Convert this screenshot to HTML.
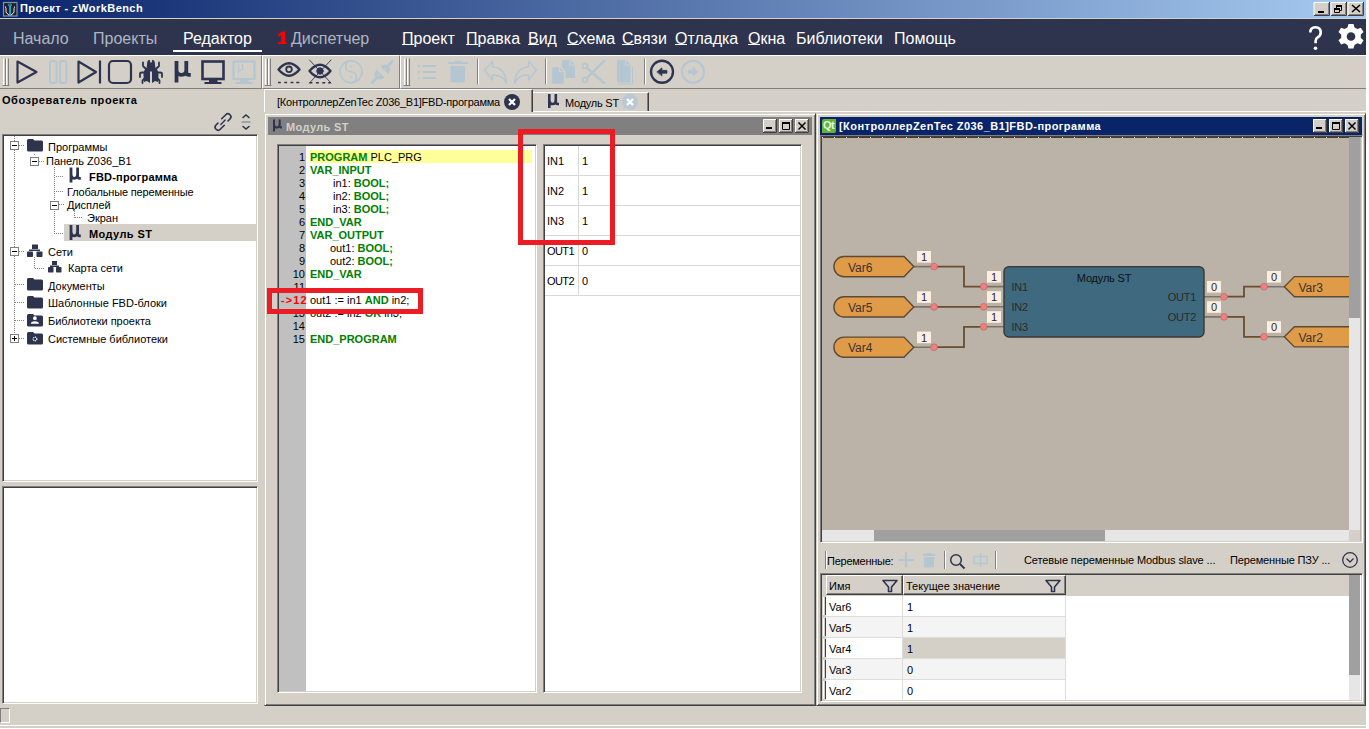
<!DOCTYPE html>
<html><head><meta charset="utf-8">
<style>
*{margin:0;padding:0;box-sizing:border-box}
html,body{width:1369px;height:729px;overflow:hidden;background:#fff;font-family:"Liberation Sans",sans-serif;font-size:11px;color:#000}
.a{position:absolute}
#app{position:absolute;left:0;top:0;width:1366px;height:728px;background:#d4d0c8;overflow:hidden}
.t{position:absolute;white-space:nowrap;line-height:1}
.m{position:absolute;top:31px;font-size:16px;color:#fff;white-space:nowrap;line-height:1}
.m u{text-decoration:none;display:inline-block;height:14px;border-bottom:1px solid #fff}
.tab{position:absolute;top:31px;font-size:16px;color:#aeb6c2;white-space:nowrap;line-height:1}
svg{position:absolute;overflow:visible}
.sunk{border:1px solid;border-color:#808080 #fff #fff #808080;box-shadow:inset 1px 1px 0 #404040,inset -1px -1px 0 #d4d0c8}
.hdr{background:#d4d0c8;border-top:1px solid #fff;border-left:1px solid #fff;border-right:1px solid #404040;border-bottom:1px solid #404040;box-shadow:inset -1px -1px 0 #808080}
#ed .ln{height:13px;line-height:13px;white-space:nowrap;position:relative}
#ed .ln b{display:inline-block;width:27px;text-align:right;font-weight:normal;padding-right:1px}
#ed .ln span{position:absolute;left:31px;top:0}
#ed i{font-style:normal;font-weight:bold;color:#008000}

</style></head>
<body>
<div id="app">
 <!-- title bar -->
 <div class="a" style="left:0;top:0;width:1366px;height:18px;background:linear-gradient(to right,#0a246a,#a6caf0)"></div>
 <div class="t" style="left:20px;top:3px;font-weight:bold;color:#fff;font-size:11px;letter-spacing:0.45px">Проект - zWorkBench</div>
 <!-- menu bar -->
 <div class="a" style="left:0;top:19px;width:1366px;height:36px;background:#2e344e"></div>
 <div class="tab" style="left:13px">Начало</div>
 <div class="tab" style="left:93px">Проекты</div>
 <div class="tab" style="left:183px;color:#fff">Редактор</div>
 <div class="a" style="left:173px;top:50px;width:89px;height:2px;background:#fff"></div>
 <svg style="left:0;top:0" width="300" height="50"><path d="M278.3 34.2L282.3 31.5H285.2V42.2H286.6V44H278V42.2H281.2V35.3L278.3 36.4Z" fill="#f00"/></svg>
 <div class="tab" style="left:291px">Диспетчер</div>
 <div class="m" style="left:402px"><u>П</u>роект</div>
 <div class="m" style="left:466px"><u>П</u>равка</div>
 <div class="m" style="left:528px"><u>В</u>ид</div>
 <div class="m" style="left:567px"><u>С</u>хема</div>
 <div class="m" style="left:622px"><u>С</u>вязи</div>
 <div class="m" style="left:675px"><u>О</u>тладка</div>
 <div class="m" style="left:748px"><u>О</u>кна</div>
 <div class="m" style="left:796px">Библиотеки</div>
 <div class="m" style="left:894px">Помощь</div>
 <!-- window buttons -->

 <div class="a" style="left:1314px;top:2px;width:16px;height:14px" class="wb"></div>
 <svg style="left:0;top:0" width="1366" height="90">
  <!-- app icon -->
  <rect x="3.5" y="2.5" width="13.5" height="13.5" fill="#1c2236" stroke="#8a8e98" stroke-width="1.2"/>
  <path d="M10 5.5V15.5" stroke="#22c0d0" stroke-width="1.6"/><ellipse cx="10" cy="5" rx="1.8" ry="1" fill="none" stroke="#20a8b8" stroke-width="0.9"/>
  <path d="M5.5 6.5q0 1.5 0.5 2.2v3q0 1.5 2 2.3l1 1.5M14.5 6.5q0 1.5 -0.5 2.2v3q0 1.5 -2 2.3l-1 1.5" stroke="#e8e8e8" stroke-width="1" fill="none"/>
  <!-- title buttons -->
  <g id="wbtn">
   <rect x="1314" y="2" width="16" height="14" fill="#d4d0c8"/>
   <path d="M1314 15.5V2.5H1329.5" stroke="#fff" fill="none"/>
   <path d="M1314 15.5H1329.5V2" stroke="#404040" fill="none"/>
   <path d="M1315 14.5H1328.5V3" stroke="#808080" fill="none"/>
   <rect x="1318" y="11" width="6" height="2" fill="#000"/>
   <rect x="1331" y="2" width="16" height="14" fill="#d4d0c8"/>
   <path d="M1331 15.5V2.5H1346.5" stroke="#fff" fill="none"/>
   <path d="M1331 15.5H1346.5V2" stroke="#404040" fill="none"/>
   <path d="M1332 14.5H1345.5V3" stroke="#808080" fill="none"/>
   <path d="M1336.5 5.5h5v5h-5z M1334.5 8.5h5v4h-5z" stroke="#000" fill="none"/>
   <path d="M1336 5h6v2h-6z M1334 8h6v2h-6z" fill="#000"/>
   <rect x="1335" y="10" width="4" height="2" fill="#d4d0c8"/>
   <rect x="1348" y="2" width="16" height="14" fill="#d4d0c8"/>
   <path d="M1348 15.5V2.5H1363.5" stroke="#fff" fill="none"/>
   <path d="M1348 15.5H1363.5V2" stroke="#404040" fill="none"/>
   <path d="M1349 14.5H1362.5V3" stroke="#808080" fill="none"/>
   <path d="M1352 5l8 7M1360 5l-8 7" stroke="#000" stroke-width="1.6"/>
  </g>
  <!-- help & gear -->
  <path d="M1310.3 32.5q0 -5.3 5.2 -5.3q5.2 0 5.2 5.2q0 3 -2.8 4.8q-2.3 1.5 -2.3 3.8v2.2" stroke="#fff" stroke-width="2.6" fill="none"/><circle cx="1315.5" cy="48.3" r="1.8" fill="#fff"/>
  <g transform="translate(1351,36.5)" fill="#fff">
   <path d="M-2.5,-12.5h5l1,3.5 3,1.6 3.4,-1.3 2.6,4.3 -2.7,2.4v3.4l2.7,2.4 -2.6,4.3 -3.4,-1.3 -3,1.6 -1,3.5h-5l-1,-3.5 -3,-1.6 -3.4,1.3 -2.6,-4.3 2.7,-2.4v-3.4l-2.7,-2.4 2.6,-4.3 3.4,1.3 3,-1.6z"/>
   <circle r="4.3" fill="#2e344e"/>
  </g>
 </svg>
 <!-- toolbar -->
 <div class="a" style="left:0;top:55px;width:1366px;height:34px;background:#d4d0c8;border-top:1px solid #fff;border-bottom:1px solid #808080"></div>
 <svg style="left:0;top:0" width="1366" height="90">
  <g fill="none" stroke-linecap="round" stroke-linejoin="round">
   <!-- grips -->
   <g id="grip"><path d="M3.5 59v26M6.5 59v26" stroke="#fff"/><path d="M5.5 59v26M8.5 59v26M3 85.5h3M6 85.5h3" stroke="#808080"/></g>
   <use href="#grip" x="262"/>
   <use href="#grip" x="401"/>
   <!-- separators -->
   <path d="M261.5 56v32M399.5 56v32" stroke="#808080"/><path d="M262.5 56v32M400.5 56v32" stroke="#fff"/>
   <path d="M477.5 59v25M545.5 59v25M644.5 59v25" stroke="#808080"/><path d="M478.5 59v25M546.5 59v25M645.5 59v25" stroke="#fff"/>
   <!-- play -->
   <path d="M17.5 61.5L36.5 72L17.5 82.5Z" stroke="#2e3450" stroke-width="2.2"/>
   <!-- pause -->
   <rect x="50" y="61" width="6.5" height="22" rx="2" stroke="#b3c6d2" stroke-width="2"/>
   <rect x="60" y="61" width="6.5" height="22" rx="2" stroke="#b3c6d2" stroke-width="2"/>
   <!-- step -->
   <path d="M78.5 61.5L96 72L78.5 82.5Z" stroke="#2e3450" stroke-width="2.2"/>
   <path d="M100 60.5v23" stroke="#2e3450" stroke-width="2.2" stroke-linecap="butt"/>
   <!-- stop -->
   <rect x="109" y="61" width="22" height="22" rx="4" stroke="#2e3450" stroke-width="2.2"/>
   <!-- mu -->
   <path d="M176.5 61V82.5M176.5 70Q176.5 74.8 181.4 74.8Q186.3 74.8 186.3 70M186.3 61V72Q186.3 74.8 189 74.8H190.8" stroke="#2e3450" stroke-width="3.8" stroke-linecap="butt" stroke-linejoin="miter"/>
   <!-- monitor -->
   <rect x="202.5" y="61.5" width="21" height="17.5" stroke="#2e3450" stroke-width="2.6" stroke-linejoin="miter"/>
   <path d="M209 81h8.5" stroke="#2e3450" stroke-width="2" stroke-linecap="butt"/><path d="M204.5 83h17" stroke="#2e3450" stroke-width="2" stroke-linecap="butt"/>
   <!-- monitor disabled -->
   <rect x="233.5" y="61.5" width="21" height="17.5" stroke="#b3c6d2" stroke-width="2.2" stroke-linejoin="miter"/>
   <path d="M240 81h8.5" stroke="#b3c6d2" stroke-width="2" stroke-linecap="butt"/><path d="M235.5 83h17" stroke="#b3c6d2" stroke-width="2" stroke-linecap="butt"/>
   <path d="M238.5 64v9M238.5 66v3c0 2 3 2 4 0v-5" stroke="#b3c6d2" stroke-width="1.2"/>
   <!-- eye -->
   <path d="M278.5 69.5Q289 57 299.5 69.5Q289 82 278.5 69.5Z" stroke="#2e3450" stroke-width="2.4"/>
   <circle cx="289" cy="69.3" r="2.8" stroke="#2e3450" stroke-width="1.8"/>
   <path d="M278 82.5h2.8M284.3 82.5h2.8M290.6 82.5h2.8M296.3 82.5h3" stroke="#2e3450" stroke-width="1.6" stroke-linecap="butt"/>
   <!-- eye crossed -->
   <path d="M309.5 71Q320 58.5 330.5 71Q320 83.5 309.5 71Z" stroke="#2e3450" stroke-width="2.4"/>
   <circle cx="320" cy="71" r="3.2" fill="#2e3450" stroke="#2e3450"/>
   <path d="M309.5 60l21.5 23M331 60l-21.5 23" stroke="#2e3450" stroke-width="0.9"/>
   <path d="M309.4 82.8h3M315.9 82.8h3M322.3 82.8h3M328.2 82.8h2.6" stroke="#2e3450" stroke-width="1.6" stroke-linecap="butt"/>
   <!-- yin yang -->
   <circle cx="351" cy="71.8" r="11" stroke="#b3c6d2" stroke-width="1.5"/>
   <path d="M351 60.8a5.5 5.5 0 0 0 0 11a5.5 5.5 0 0 1 0 11" stroke="#b3c6d2" stroke-width="1.5"/>
   <circle cx="351" cy="66.5" r="1" fill="#b3c6d2" stroke="none"/><circle cx="351" cy="77" r="1" fill="#b3c6d2" stroke="none"/>
   <!-- plug -->
   <path d="M381.5 66.5L388 73Q391 68.5 387.9 66.6Q386 63.5 381.5 66.5Z" fill="#b3c6d2" stroke="#b3c6d2" stroke-width="1.2"/>
   <path d="M376.5 70.5L383.5 77.5Q378.5 80.5 376.8 77.2Q373.5 75.5 376.5 70.5Z" fill="#b3c6d2" stroke="#b3c6d2" stroke-width="1.2"/>
   <path d="M388 66L392.3 61.3M376.5 78L372.3 82.5" stroke="#b3c6d2" stroke-width="2.6"/>
   <circle cx="385.3" cy="68.8" r="0.9" fill="#d4d0c8" stroke="none"/><circle cx="378.5" cy="75.5" r="0.9" fill="#d4d0c8" stroke="none"/>
   <!-- list -->
   <circle cx="419" cy="66" r="1.2" fill="#b3c6d2" stroke="none"/><circle cx="419" cy="72" r="1.2" fill="#b3c6d2" stroke="none"/><circle cx="419" cy="78" r="1" fill="#b3c6d2" stroke="none"/>
   <path d="M422.5 66h13.5M422.5 72h13.5M422.5 78h13.5" stroke="#b3c6d2" stroke-width="2" stroke-linecap="butt"/>
   <!-- trash -->
   <path d="M449 63h18" stroke="#b3c6d2" stroke-width="2.2"/><path d="M455.5 61.5h5" stroke="#b3c6d2" stroke-width="1.5"/>
   <path d="M450.5 66h14.5v14.5q0 2 -2 2h-10.5q-2 0 -2 -2z" fill="#b3c6d2" stroke="none"/>
   <!-- undo -->
   <path d="M484.5 70l8 -8.5v5.5q13 0.5 14 16.5q-3 -8.5 -14 -8.5v5z" stroke="#b3c6d2" stroke-width="1.4"/>
   <!-- redo -->
   <path d="M536.5 70l-8 -8.5v5.5q-13 0.5 -14 16.5q3 -8.5 14 -8.5v5z" stroke="#b3c6d2" stroke-width="1.4"/>
   <!-- copy -->
   <path d="M562 60h8.5l4.5 4.5v13.5h-13z" fill="#b3c6d2" stroke="none"/><path d="M570 60.5v4.5h4.5" stroke="#d4d0c8" stroke-width="1.2"/><path d="M551.5 66.5h8.5l4.5 4.5v13.5h-13z" fill="#b3c6d2" stroke="#d4d0c8" stroke-width="1.5"/><path d="M559.5 67v4.5h4.5" stroke="#d4d0c8" stroke-width="1.2"/>
   <!-- cut -->
   <circle cx="585" cy="66" r="2.5" stroke="#b3c6d2" stroke-width="1.6"/><circle cx="585" cy="80" r="2.5" stroke="#b3c6d2" stroke-width="1.6"/>
   <path d="M587 78l17 -17M587 68l17 15" stroke="#b3c6d2" stroke-width="2.4"/>
   <!-- paste -->
   <path d="M617 60h9l4.5 4.5v18h-13.5z" fill="#b3c6d2" stroke="none"/><path d="M625.5 60.5v4.5h4.5" stroke="#d4d0c8" stroke-width="1.2"/><path d="M632.5 67v17h-14" stroke="#b3c6d2" stroke-width="1"/>
   <!-- back -->
   <circle cx="662" cy="71.8" r="11" stroke="#2e3450" stroke-width="2.4"/>
   <path d="M657 71.8l5 -4v2.5h5v3h-5v2.5z" fill="#2e3450" stroke="#2e3450" stroke-width="0.6"/>
   <!-- fwd -->
   <circle cx="693" cy="71.8" r="11" stroke="#b3c6d2" stroke-width="2"/>
   <path d="M698 71.8l-5 -4v2.5h-5v3h5v2.5z" fill="#b3c6d2" stroke="#b3c6d2" stroke-width="0.6"/>
   <!-- bug -->
   <path d="M143 62.5V66L146 69M159 62.5V66L156 69M140 77V74Q140 72.5 142 72.5H144.5M162 77V74Q162 72.5 160 72.5H157.5M142.5 83V80.5L145.5 77.5M159.5 83V80.5L156.5 77.5" stroke="#2e3450" stroke-width="1.8" stroke-linecap="round" fill="none"/>
   <path d="M147 65Q147 60.5 148.8 60L149.8 60L150.3 62.5H151.7L152.2 60H153.2Q155 60.5 155 65L155.5 68Q158.5 70 158.5 75L158 82L155 81L152 83V71.5H150V83L147 81L144 82L143.5 75Q143.5 70 146.5 68Z" fill="#2e3450" stroke="none"/>
  </g>
 </svg>

 <!-- ===== LEFT PANEL ===== -->
 <div class="t" style="left:2px;top:95px;font-weight:bold;letter-spacing:0.55px">Обозреватель проекта</div>
 <svg style="left:0;top:0" width="260" height="140">
  <g fill="none" stroke="#2e3450" stroke-width="1.6" stroke-linecap="round">
   <g transform="translate(226.3,118.4) rotate(-45)"><path d="M-3.5 -3H2.2A3 3 0 0 1 2.2 3H-0.5"/></g>
   <g transform="translate(219.7,125.6) rotate(-45)"><path d="M3.5 3H-2.2A3 3 0 0 1 -2.2 -3H0.5"/></g>
   <path d="M220.8 124.5L225.2 120.1" stroke-width="1.4"/>
   <path d="M243 117.5l3 -2.5 3 2.5M243 126.5l3 2.5 3 -2.5"/>
  </g>
  <path d="M241.5 122h9" stroke="#8a8f9c" stroke-width="1.4"/>
 </svg>
 <div class="a sunk" style="left:2px;top:134px;width:256px;height:348px;background:#fff"></div>
 <div class="a sunk" style="left:2px;top:486px;width:256px;height:218px;background:#fff"></div>
 <div class="a" style="left:64px;top:224px;width:192px;height:17px;background:#d4d0c8"></div>
 <svg style="left:0;top:0" width="260" height="350">
  <g stroke="#808080" stroke-dasharray="1 1" fill="none">
   <path d="M14.5 136v199M54.5 167v67M74.5 209v9M34.5 154v2"/>
   <path d="M19 145.5h5M39 161.5h6M56 176.5h8M56 191.5h8M59 204.5h5M75 217.5h8M56 233.5h8M19 251.5h5M35 268.5h10M15 284.5h9M15 302.5h9M15 320.5h9M19 338.5h5M34.5 257v12"/>
  </g>
  <g fill="#fff" stroke="#808080">
   <rect x="10.5" y="141.5" width="8" height="8"/><rect x="30.5" y="157.5" width="8" height="8"/><rect x="50.5" y="201.5" width="8" height="8"/><rect x="10.5" y="247.5" width="8" height="8"/><rect x="10.5" y="334.5" width="8" height="8"/>
  </g>
  <path d="M12 145.5h5M32 161.5h5M52 205.5h5M12 251.5h5M12 338.5h5M14.5 336v5" stroke="#000"/>
  <g fill="#2e344e">
   <path id="fold" d="M27 140.5q0 -1.5 1.5 -1.5h4.5l1.5 1.5h7q1.5 0 1.5 1.5v8q0 1.5 -1.5 1.5h-13q-1.5 0 -1.5 -1.5z"/>
   <use href="#fold" y="139"/><use href="#fold" y="157"/><use href="#fold" y="175"/><use href="#fold" y="193"/>
   <!-- network -->
   <rect x="32" y="244.5" width="6" height="4.5"/><rect x="27" y="251.5" width="6" height="5.5" rx="0.8"/><rect x="36.5" y="251.5" width="6" height="5.5" rx="0.8"/><rect x="29" y="249.5" width="11" height="1.5"/>
   <rect x="52" y="261" width="5" height="4"/><rect x="48" y="267" width="5.5" height="5.5" rx="0.8"/><rect x="56" y="267" width="5.5" height="5.5" rx="0.8"/><rect x="50" y="265.5" width="9" height="1.5"/>
   <!-- mu -->
   <path d="M71 167.5V182.5M71 173.5Q71 178.3 74.2 178.3Q77.6 178.3 77.6 173.5M77.6 167.5V176Q77.6 178.3 79.5 178.3H80.8" stroke="#2e344e" stroke-width="2.8" fill="none"/>
   <path d="M71 225V240M71 231Q71 235.8 74.2 235.8Q77.6 235.8 77.6 231M77.6 225V233.5Q77.6 235.8 79.5 235.8H80.8" stroke="#2e344e" stroke-width="2.8" fill="none"/>
  </g>
  <path d="M33 318.2a1.9 1.9 0 1 0 3.8 0a1.9 1.9 0 1 0 -3.8 0M30.8 323.8q0 -2.6 4.1 -2.6q4.1 0 4.1 2.6z" fill="#fff"/>
  <circle cx="35" cy="339" r="1.9" fill="none" stroke="#fff" stroke-width="1.2" stroke-dasharray="1 0.6"/>
 </svg>
 <div class="t" style="left:48px;top:142px">Программы</div>
 <div class="t" style="left:46px;top:156px">Панель Z036_B1</div>
 <div class="t" style="left:89px;top:172px;font-weight:bold;letter-spacing:0.2px">FBD-программа</div>
 <div class="t" style="left:67px;top:187px;letter-spacing:-0.15px">Глобальные переменные</div>
 <div class="t" style="left:67px;top:200px">Дисплей</div>
 <div class="t" style="left:87px;top:213px">Экран</div>
 <div class="t" style="left:89px;top:229px;font-weight:bold;letter-spacing:0.4px">Модуль ST</div>
 <div class="t" style="left:48px;top:247px">Сети</div>
 <div class="t" style="left:68px;top:263px">Карта сети</div>
 <div class="t" style="left:48px;top:281px">Документы</div>
 <div class="t" style="left:48px;top:298px">Шаблонные FBD-блоки</div>
 <div class="t" style="left:48px;top:316px">Библиотеки проекта</div>
 <div class="t" style="left:48px;top:334px">Системные библиотеки</div>

 <!-- ===== TAB BAR ===== -->
 <div class="a" style="left:264px;top:111px;width:1102px;height:1px;background:#fff"></div>
 <div class="a" style="left:264px;top:89px;width:269px;height:23px;background:#d4d0c8;border-left:1px solid #fff;border-top:1px solid #fff;border-right:1px solid #404040;box-shadow:inset -1px 0 0 #808080"></div>
 <div class="t" style="left:277px;top:97px;letter-spacing:-0.23px">[КонтроллерZenTec Z036_B1]FBD-программа</div>
 <div class="a" style="left:533px;top:92px;width:116px;height:19px;border-top:1px solid #fff;border-right:1px solid #404040;box-shadow:inset -1px 0 0 #808080"></div>
 <div class="t" style="left:565px;top:98px;letter-spacing:-0.25px">Модуль ST</div>
 <svg style="left:0;top:0" width="660" height="112">
  <circle cx="512" cy="102" r="8" fill="#2e344e"/>
  <path d="M509 99l6 6M515 99l-6 6" stroke="#fff" stroke-width="2.2"/>
  <circle cx="630" cy="102" r="8" fill="#b9c9d3"/>
  <path d="M627 99l6 6M633 99l-6 6" stroke="#fff" stroke-width="2.2"/>
  <path d="M549.3 94V108M549.3 99.5Q549.3 104 552.5 104Q555.8 104 555.8 99.5M555.8 94V102Q555.8 104 557.6 104H559" stroke="#2e344e" stroke-width="2.6" fill="none"/>
 </svg>

 <!-- ===== MDI AREA ===== -->
 <!-- left window -->
 <div class="a" style="left:264px;top:113px;width:552px;height:593px;background:#d4d0c8;border-left:1px solid #d4d0c8;border-top:1px solid #d4d0c8;border-right:1px solid #404040;border-bottom:1px solid #404040;box-shadow:inset 1px 1px 0 #fff,inset -1px -1px 0 #808080"></div>
 <div class="a" style="left:268px;top:117px;width:544px;height:18px;background:#808080"></div>
 <svg style="left:0;top:0" width="820" height="140">
  <path d="M274 119.5V131.6M274 124Q274 127.5 276.8 127.5Q279.7 127.5 279.7 124M279.7 119.5V125.8Q279.7 127.5 281.2 127.5H282" stroke="#2e344e" stroke-width="2" fill="none"/>
  <g id="mbtn">
   <rect x="763" y="119" width="14" height="14" fill="#d4d0c8"/>
   <path d="M763.5 132.5V119.5H776.5" stroke="#fff" fill="none"/>
   <path d="M763 132.5H776.5V119" stroke="#404040" fill="none"/>
   <path d="M764 131.5H775.5V120" stroke="#808080" fill="none"/>
  </g>
  <use href="#mbtn" x="16"/><use href="#mbtn" x="32"/>
  <rect x="766" y="127" width="6" height="2" fill="#000"/>
  <path d="M782.5 122.5h7v7h-7z" stroke="#000" fill="none"/><rect x="782" y="122" width="8" height="2" fill="#000"/>
  <path d="M798.5 122.5l7 7M805.5 122.5l-7 7" stroke="#000" stroke-width="1.5"/>
 </svg>
 <div class="t" style="left:286px;top:122px;font-weight:bold;color:#d4d0c8;letter-spacing:0.35px">Модуль ST</div>

 <!-- editor -->
 <div class="a sunk" style="left:277px;top:144px;width:260px;height:549px;background:#fff"></div>
 <div class="a" style="left:279px;top:146px;width:27px;height:545px;background:#c0c0c0"></div>
 <div class="a" style="left:310px;top:150px;width:222px;height:13px;background:#ffff99"></div>
 <div id="ed" class="a" style="left:279px;top:151px;width:255px">
  <div class="ln"><b>1</b><span><i>PROGRAM</i> PLC_PRG</span></div>
  <div class="ln"><b>2</b><span><i>VAR_INPUT</i></span></div>
  <div class="ln"><b>3</b><span style="padding-left:23px">in1: <i>BOOL;</i></span></div>
  <div class="ln"><b>4</b><span style="padding-left:23px">in2: <i>BOOL;</i></span></div>
  <div class="ln"><b>5</b><span style="padding-left:23px">in3: <i>BOOL;</i></span></div>
  <div class="ln"><b>6</b><span><i>END_VAR</i></span></div>
  <div class="ln"><b>7</b><span><i>VAR_OUTPUT</i></span></div>
  <div class="ln"><b>8</b><span style="padding-left:20px">out1: <i>BOOL;</i></span></div>
  <div class="ln"><b>9</b><span style="padding-left:20px">out2: <i>BOOL;</i></span></div>
  <div class="ln"><b>10</b><span><i>END_VAR</i></span></div>
  <div class="ln"><b>11</b><span></span></div>
  <div class="ln"><b style="color:#f00;font-weight:bold;letter-spacing:1.1px;position:relative;left:2px">-&gt;12</b><span>out1 := in1 <i>AND</i> in2;</span></div>
  <div class="ln"><b>13</b><span>out2 := in2 <i>OR</i> in3;</span></div>
  <div class="ln"><b>14</b><span></span></div>
  <div class="ln"><b>15</b><span><i>END_PROGRAM</i></span></div>
 </div>
 <!-- red annotation 12 -->
 <div class="a" style="left:267px;top:288px;width:156px;height:26px;border:5px solid #ec1c24"></div>

 <!-- watch table -->
 <div class="a sunk" style="left:543px;top:144px;width:259px;height:549px;background:#fff"></div>
 <div class="a" style="left:545px;top:175px;width:255px;height:1px;background:#d8d8d8"></div>
 <div class="a" style="left:545px;top:205px;width:255px;height:1px;background:#d8d8d8"></div>
 <div class="a" style="left:545px;top:235px;width:255px;height:1px;background:#d8d8d8"></div>
 <div class="a" style="left:545px;top:265px;width:255px;height:1px;background:#d8d8d8"></div>
 <div class="a" style="left:545px;top:295px;width:255px;height:1px;background:#d8d8d8"></div>
 <div class="a" style="left:578px;top:146px;width:1px;height:149px;background:#d8d8d8"></div>
 <div class="t" style="left:547px;top:156px">IN1</div><div class="t" style="left:582px;top:156px">1</div>
 <div class="t" style="left:547px;top:186px">IN2</div><div class="t" style="left:582px;top:186px">1</div>
 <div class="t" style="left:547px;top:216px">IN3</div><div class="t" style="left:582px;top:216px">1</div>
 <div class="t" style="left:547px;top:246px;letter-spacing:-0.6px">OUT1</div><div class="t" style="left:582px;top:246px">0</div>
 <div class="t" style="left:547px;top:276px;letter-spacing:-0.6px">OUT2</div><div class="t" style="left:582px;top:276px">0</div>
 <!-- red annotation watch -->
 <div class="a" style="left:518px;top:129px;width:97px;height:116px;border:5px solid #ec1c24"></div>

 <!-- right window -->
 <div class="a" style="left:816px;top:113px;width:550px;height:593px;background:#d4d0c8;border-left:1px solid #d4d0c8;border-top:1px solid #d4d0c8;border-right:1px solid #404040;border-bottom:1px solid #404040;box-shadow:inset 1px 1px 0 #fff,inset -1px -1px 0 #808080"></div>
 <div class="a" style="left:820px;top:117px;width:542px;height:18px;background:linear-gradient(to right,#0a246a,#0a246a)"></div>
 <div class="a" style="left:822px;top:119px;width:14px;height:14px;background:#62b536;border-radius:2px 0 2px 0"></div>
 <div class="t" style="left:823px;top:120px;font-weight:bold;color:#e8f5e8;font-size:11px;letter-spacing:-0.5px">Qt</div>
 <div class="t" style="left:839px;top:121px;font-weight:bold;color:#fff;letter-spacing:0.45px">[КонтроллерZenTec Z036_B1]FBD-программа</div>
 <svg style="left:0;top:0" width="1366" height="140">
  <use href="#mbtn" x="550"/><use href="#mbtn" x="566"/><use href="#mbtn" x="582"/>
  <rect x="1316" y="127" width="6" height="2" fill="#000"/>
  <path d="M1332.5 122.5h7v7h-7z" stroke="#000" fill="none"/><rect x="1332" y="122" width="8" height="2" fill="#000"/>
  <path d="M1348.5 122.5l7 7M1355.5 122.5l-7 7" stroke="#000" stroke-width="1.5"/>
 </svg>
 <!-- canvas -->
 <div class="a sunk" style="left:820px;top:135px;width:543px;height:408px;background:#bbb3a8"></div>
 <div class="a" style="left:822px;top:137px;width:527px;height:1px;background:repeating-linear-gradient(to right,#e4dccc 0 1px,#4a3a28 1px 12px)"></div>
 <div class="a" style="left:1349px;top:137px;width:11px;height:393px;background:#e6e6e6"></div>
 <div class="a" style="left:1349px;top:137px;width:11px;height:181px;background:#a0a0a0"></div>
 <div class="a" style="left:822px;top:530px;width:527px;height:11px;background:#e6e6e6"></div>
 <div class="a" style="left:874px;top:530px;width:231px;height:11px;background:#a0a0a0"></div>
 <div class="a" style="left:1349px;top:530px;width:11px;height:11px;background:#d4d0c8"></div>

 <div class="a" style="left:822px;top:138px;width:527px;height:392px;overflow:hidden">
 <svg style="left:-822px;top:-138px" width="1366" height="560">
  <defs>
   <g id="lbl1"><rect x="0" y="0" width="14" height="11.5" fill="#fcefdf"/></g>
  </defs>
  <!-- wires gray stubs -->
  <g stroke="#7c7268" stroke-width="1.6" fill="none">
   <path d="M914 266.6h20M914 306.9h20M914 347.2h20"/>
   <path d="M983.7 286.6h20.5M983.7 306.8h20.5M983.7 326.8h20.5"/>
   <path d="M1204 296.7h20M1204 316.9h20"/>
   <path d="M1264 286.7h20.5M1264 336.8h20.5"/>
  </g>
  <g stroke="#6b4e30" stroke-width="1.8" fill="none">
   <path d="M934 266.6h30v20h19.7"/>
   <path d="M934 306.9h49.7"/>
   <path d="M934 347.2h30v-20.4h19.7"/>
   <path d="M1224 296.7h20v-10h20"/>
   <path d="M1224 316.9h20v19.9h20"/>
  </g>
  <!-- pills left -->
  <g fill="#e09b48" stroke="#5d4a36" stroke-width="1.4">
   <path d="M844 256.5h60l9.8 10.1 -9.8 10.1h-60a10.1 10.1 0 0 1 0 -20.2z"/>
   <path d="M844 296.8h60l9.8 10.1 -9.8 10.1h-60a10.1 10.1 0 0 1 0 -20.2z"/>
   <path d="M844 337.1h60l9.8 10.1 -9.8 10.1h-60a10.1 10.1 0 0 1 0 -20.2z"/>
   <path d="M1380 276.6h-85.6l-10.1 10.1 10.1 10.1h85.6z"/>
   <path d="M1380 326.7h-85.6l-10.1 10.1 10.1 10.1h85.6z"/>
  </g>
  <!-- block -->
  <rect x="1004" y="266.6" width="200" height="70.4" rx="5" fill="#3e697e" stroke="#3b3732" stroke-width="1.4"/>
  <!-- dots -->
  <g fill="#f07f7f" stroke="#b86060" stroke-width="0.6">
   <circle cx="934" cy="266.6" r="3.4"/><circle cx="934" cy="306.9" r="3.4"/><circle cx="934" cy="347.2" r="3.4"/>
   <circle cx="983.7" cy="286.6" r="3.4"/><circle cx="983.7" cy="306.8" r="3.4"/><circle cx="983.7" cy="326.8" r="3.4"/>
   <circle cx="1224" cy="296.7" r="3.4"/><circle cx="1224" cy="316.9" r="3.4"/>
   <circle cx="1264" cy="286.7" r="3.4"/><circle cx="1264" cy="336.8" r="3.4"/>
  </g>
  <!-- value labels -->
  <g fill="#fcefdf">
   <rect x="917" y="251" width="14" height="11.6"/><rect x="917" y="291.3" width="14" height="11.6"/><rect x="917" y="331.6" width="14" height="11.6"/>
   <rect x="987" y="271" width="14" height="11.6"/><rect x="987" y="291.2" width="14" height="11.6"/><rect x="987" y="311.2" width="14" height="11.6"/>
   <rect x="1207" y="281" width="14" height="11.6"/><rect x="1207" y="301.2" width="14" height="11.6"/>
   <rect x="1267" y="271" width="14" height="11.6"/><rect x="1267" y="321.2" width="14" height="11.6"/>
  </g>
  <g font-family="Liberation Sans" font-size="11" fill="#2a1f3a" text-anchor="middle">
   <text x="924" y="261">1</text><text x="924" y="301.3">1</text><text x="924" y="341.6">1</text>
   <text x="994" y="281">1</text><text x="994" y="301.2">1</text><text x="994" y="321.2">1</text>
   <text x="1214" y="291">0</text><text x="1214" y="311.2">0</text>
   <text x="1274" y="281">0</text><text x="1274" y="331.2">0</text>
  </g>
  <g font-family="Liberation Sans" font-size="12" fill="#3a3430">
   <text x="848" y="271.7">Var6</text><text x="848" y="312">Var5</text><text x="848" y="352.3">Var4</text>
   <text x="1298.5" y="291.7">Var3</text><text x="1298.5" y="341.8">Var2</text>
  </g>
  <g font-family="Liberation Sans" font-size="11" fill="#2e2a28">
   <text x="1011.5" y="291" letter-spacing="-0.3">IN1</text><text x="1011.5" y="310.8" letter-spacing="-0.3">IN2</text><text x="1011.5" y="330.6" letter-spacing="-0.3">IN3</text>
   <text x="1196" y="300.6" text-anchor="end" letter-spacing="-0.3">OUT1</text><text x="1196" y="320.8" text-anchor="end" letter-spacing="-0.3">OUT2</text>
   <text x="1104" y="281.8" text-anchor="middle" fill="#111" letter-spacing="-0.2">Модуль ST</text>
  </g>
 </svg>
 </div>


 <!-- variables panel -->
 <div class="a" style="left:825px;top:551px;width:1px;height:18px;background:#808080;box-shadow:1px 0 0 #fff"></div>
 <div class="t" style="left:827px;top:556px;letter-spacing:-0.25px">Переменные:</div>
 <svg style="left:0;top:0" width="1366" height="580">
  <path d="M906 552v15.5M898 560h16" stroke="#b3c6d2" stroke-width="2.2"/>
  <path d="M923 555h12" stroke="#b3c6d2" stroke-width="1.8"/><path d="M926.5 553.5h5" stroke="#b3c6d2" stroke-width="1.2"/>
  <path d="M924 557h10v9q0 1.5 -1.5 1.5h-7q-1.5 0 -1.5 -1.5z" fill="#b3c6d2"/>
  <path d="M944.5 551v18M995.5 551v18" stroke="#808080"/><path d="M945.5 551v18M996.5 551v18" stroke="#fff"/>
  <circle cx="956" cy="560" r="5.3" stroke="#2e3450" stroke-width="1.5" fill="none"/><path d="M960 564l4.5 4.5" stroke="#2e3450" stroke-width="1.8"/>
  <path d="M974 556.5h13v7h-13zM980.5 553v14" stroke="#b3c6d2" stroke-width="1.6" fill="none"/>
  <circle cx="1350" cy="560" r="7.3" stroke="#2e3450" stroke-width="1.3" fill="none"/><path d="M1346.5 558.5l3.5 3.5 3.5 -3.5" stroke="#2e3450" stroke-width="1.3" fill="none"/>
 </svg>
 <div class="t" style="left:1024px;top:555px;letter-spacing:-0.1px">Сетевые переменные Modbus slave ...</div>
 <div class="t" style="left:1230px;top:555px;letter-spacing:-0.15px">Переменные ПЗУ ...</div>
 <!-- var table -->
 <div class="a sunk" style="left:820px;top:573px;width:543px;height:129px;background:#fff"></div>
 <div class="a" style="left:822px;top:575px;width:527px;height:21px;background:#d4d0c8"></div>
 <div class="a hdr" style="left:826px;top:575px;width:77px;height:20px"></div>
 <div class="a hdr" style="left:903px;top:575px;width:163px;height:20px"></div>
 <div class="a" style="left:822px;top:596px;width:4px;height:104px;background:#d4d0c8"></div>
 <div class="t" style="left:829px;top:581px">Имя</div>
 <div class="t" style="left:906px;top:581px">Текущее значение</div>
 <svg style="left:0;top:0" width="1366" height="720">
  <path d="M883 580.5h14l-5.5 6.5v4.5h-3v-4.5z" stroke="#2e3450" stroke-width="1.6" fill="none" stroke-linejoin="round"/>
  <path d="M1046 580.5h14l-5.5 6.5v4.5h-3v-4.5z" stroke="#2e3450" stroke-width="1.6" fill="none" stroke-linejoin="round"/>
  <g stroke="#fff"><path d="M823.5 597v18M823.5 618v18M823.5 639v18M823.5 660v18M823.5 681v18"/></g>
  <g stroke="#404040"><path d="M825.5 597v18M825.5 618v18M825.5 639v18M825.5 660v18M825.5 681v18"/></g>
 </svg>
 <div class="a" style="left:826px;top:617px;width:240px;height:20px;background:#f4f4f4"></div>
 <div class="a" style="left:903px;top:638px;width:163px;height:20px;background:#d4d0c8"></div>
 <div class="a" style="left:826px;top:659px;width:240px;height:20px;background:#f4f4f4"></div>
 <div class="a" style="left:826px;top:616px;width:240px;height:1px;background:#dcdcdc"></div>
 <div class="a" style="left:826px;top:637px;width:240px;height:1px;background:#dcdcdc"></div>
 <div class="a" style="left:826px;top:658px;width:240px;height:1px;background:#dcdcdc"></div>
 <div class="a" style="left:826px;top:679px;width:240px;height:1px;background:#dcdcdc"></div>
 <div class="a" style="left:902px;top:596px;width:1px;height:104px;background:#dcdcdc"></div>
 <div class="a" style="left:1065px;top:596px;width:1px;height:104px;background:#dcdcdc"></div>
 <div class="t" style="left:829px;top:602px">Var6</div><div class="t" style="left:907px;top:602px">1</div>
 <div class="t" style="left:829px;top:623px">Var5</div><div class="t" style="left:907px;top:623px">1</div>
 <div class="t" style="left:829px;top:644px">Var4</div><div class="t" style="left:907px;top:644px">1</div>
 <div class="t" style="left:829px;top:665px">Var3</div><div class="t" style="left:907px;top:665px">0</div>
 <div class="t" style="left:829px;top:686px">Var2</div><div class="t" style="left:907px;top:686px">0</div>
 <div class="a" style="left:1349px;top:575px;width:11px;height:125px;background:#e6e6e6"></div>
 <div class="a" style="left:1349px;top:575px;width:11px;height:100px;background:#a0a0a0"></div>

 <!-- status bar -->
 <div class="a" style="left:0;top:708px;width:10px;height:15px;border-top:1px solid #808080;border-left:1px solid #808080;border-right:1px solid #fff;border-bottom:1px solid #fff"></div>
 <div class="a" style="left:0;top:725px;width:1366px;height:1px;background:#fff"></div>
</div>
</body></html>
